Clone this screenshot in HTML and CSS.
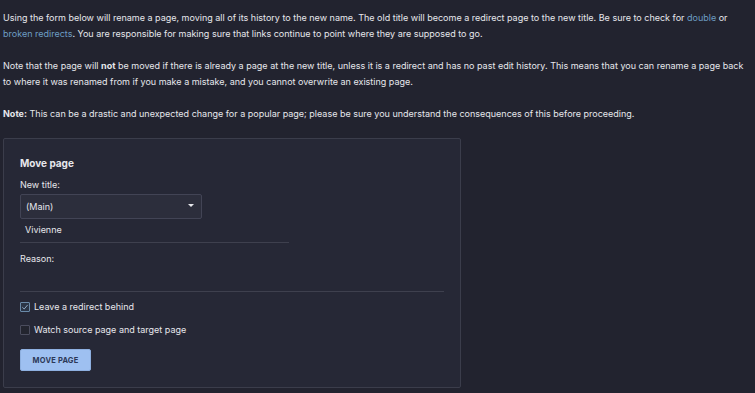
FILE: index.html
```html
<!DOCTYPE html>
<html>
<head>
<meta charset="utf-8">
<link rel="stylesheet" href="styles.css">
</head>
<body>
<div class="page">
  <p>Using the form below will rename a page, moving all of its history to the new name. The old title will become a redirect page to the new title. Be sure to check for <a href="#">double</a> or <a href="#">broken redirects</a>. You are responsible for making sure that links continue to point where they are supposed to go.</p>
  <p>Note that the page will <b>not</b> be moved if there is already a page at the new title, unless it is a redirect and has no past edit history. This means that you can rename a page back to where it was renamed from if you make a mistake, and you cannot overwrite an existing page.</p>
  <p><b>Note:</b> This can be a drastic and unexpected change for a popular page; please be sure you understand the consequences of this before proceeding.</p>
  <fieldset class="box">
    <div class="legend">Move page</div>
    <div class="label">New title:</div>
    <div class="select"><span>(Main)</span><span class="caret"></span></div>
    <div class="title-input">Vivienne</div>
    <div class="label reason-label">Reason:</div>
    <div class="reason-input"></div>
    <label class="check"><span class="cb checked"><svg width="8" height="8" viewBox="0 0 8 8"><path d="M1.3 4.2 L3.2 6 L6.7 1.9" fill="none" stroke="#9ab4d0" stroke-width="0.9"/></svg></span>Leave a redirect behind</label>
    <label class="check"><span class="cb"></span>Watch source page and target page</label>
    <button class="btn">MOVE PAGE</button>
  </fieldset>
</div>
</body>
</html>
```
FILE: styles.css
```css
html, body { margin: 0; padding: 0; }
body {
  background: #22232f;
  color: #e6e7ec;
  font-family: "Inter", "Noto Sans", sans-serif;
  font-size: 9px;
}
.page { padding: 0 3px; }
p { margin: 0 0 16px; line-height: 16px; width: 745px; }
p:first-child { padding-top: 10px; }
a { color: #6d9ec4; text-decoration: none; }
b { font-weight: 700; }
.box {
  margin: 0;
  width: 457px;
  box-sizing: border-box;
  height: 250px;
  background: #262836;
  border: 1px solid #3b3d4b;
  border-radius: 2px;
  padding: 17px 16px 0 16px;
  position: relative;
}
.legend { font-weight: 700; font-size: 10px; line-height: 14px; }
.label { line-height: 14px; margin-top: 8px; }
.select {
  margin-top: 2px;
  width: 182px; height: 25px; box-sizing: border-box;
  background: #2c2e3c;
  border: 1px solid #424455;
  border-radius: 2px;
  display: flex; align-items: center; justify-content: space-between;
  padding: 0 5px 0 5px;
}
.caret { width: 0; height: 0; border-left: 3px solid transparent; border-right: 3px solid transparent; border-top: 3px solid #e6e7ec; margin-right: 2px; margin-top: -2px; }
.title-input {
  width: 269px; box-sizing: border-box;
  padding: 5px 5px 6px;
  border-bottom: 1px solid #3e404e;
  line-height: 12px;
}
.reason-label { margin-top: 9px; }
.reason-input { width: 424px; height: 25px; border-bottom: 1px solid #3e404e; }
.check { display: flex; align-items: center; line-height: 14px; margin-top: 8px; }
.check + .check { margin-top: 9px; }
.cb { width: 10px; height: 10px; box-sizing: border-box; border: 1px solid #4b4d5e; border-radius: 1px; margin-right: 4px; display: flex; align-items: center; justify-content: center; background: #23252f; }
.cb.checked { border-color: #6a8aa8; background: #2a3445; }
.btn {
  margin-top: 12px;
  width: 71px; height: 22px;
  background: #9ec0f1;
  color: #2c3858;
  border: 1px solid #8eb0e0;
  border-radius: 2px;
  font-family: inherit; font-weight: 700; font-size: 7.5px; letter-spacing: 0.2px;
  padding: 0;
}
```
